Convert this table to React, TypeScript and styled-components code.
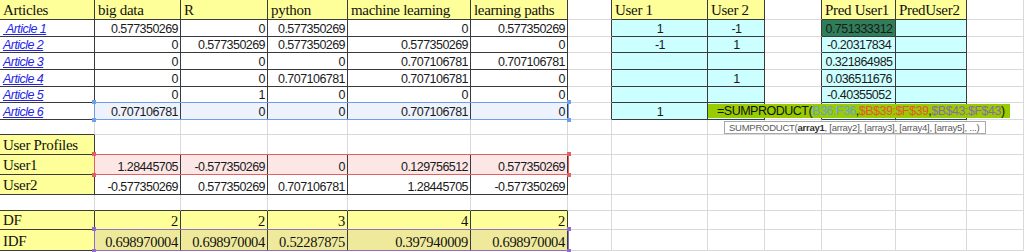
import React from "react";
import styled, { createGlobalStyle, css } from "styled-components";

const COLS = [95, 86, 87, 80, 123, 97, 44, 96, 57, 57, 74, 71, 57];
const ROWS = [20, 17, 16, 17, 17, 16, 17, 15, 20, 20, 20, 16, 19, 21];

const DARK = "#3a3a3a";
const GRID = "#d9d9d9";
const YELLOW = "#ffff99";
const CYAN = "#ccffff";
const PINK = "#fce6e6";
const ICE = "#edf2fc";
const SHADE = "#efe99c";
const DEEP = "#2f7d59";

type Font = "serif" | "sans" | "link" | "serifNum" | "none";
type Align = "left" | "right" | "center";

interface CellSpec {
  text?: string;
  font?: Font;
  align?: Align;
  fill?: string;
  r?: boolean;
  b?: boolean;
}

const Global = createGlobalStyle`
  html, body {
    margin: 0;
    padding: 0;
    width: 1024px;
    height: 252px;
    overflow: hidden;
    background: #ffffff;
  }
  #root { width: 1024px; height: 252px; }
`;

const fontCss: Record<Font, ReturnType<typeof css>> = {
  serif: css`
    font-family: "Liberation Serif", "Times New Roman", serif;
    font-size: 15px;
    letter-spacing: -0.3px;
    line-height: 17px;
    color: #111;
  `,
  serifNum: css`
    font-family: "Liberation Serif", "Times New Roman", serif;
    font-size: 14.5px;
    letter-spacing: -0.3px;
    line-height: 16px;
    color: #111;
  `,
  sans: css`
    font-family: "Liberation Sans", Arial, sans-serif;
    font-size: 12.5px;
    letter-spacing: -0.55px;
    line-height: 14px;
    color: #1a1a1a;
  `,
  link: css`
    font-family: "Liberation Sans", Arial, sans-serif;
    font-size: 12.5px;
    font-style: italic;
    letter-spacing: -0.55px;
    line-height: 14px;
    color: #2424e6;
    text-decoration: underline;
  `,
  none: css``,
};

const Sheet = styled.div`
  position: relative;
  display: grid;
  grid-template-columns: ${COLS.map((c) => `${c}px`).join(" ")};
  grid-template-rows: ${ROWS.map((r) => `${r}px`).join(" ")};
  width: 1024px;
  height: 252px;
  overflow: hidden;
`;

const Cell = styled.div<{
  $fill: string;
  $align: Align;
  $font: Font;
  $r: boolean;
  $b: boolean;
}>`
  box-sizing: border-box;
  min-width: 0;
  overflow: hidden;
  white-space: nowrap;
  display: flex;
  align-items: flex-end;
  justify-content: ${(p) =>
    p.$align === "left" ? "flex-start" : p.$align === "right" ? "flex-end" : "center"};
  padding: 0 2px 0 3px;
  background: ${(p) => p.$fill};
  border-right: 1px solid ${(p) => (p.$r ? DARK : GRID)};
  border-bottom: 1px solid ${(p) => (p.$b ? DARK : GRID)};
  ${(p) => fontCss[p.$font]}
`;

const Frame = styled.div<{ $x: number; $y: number; $w: number; $h: number; $c: string }>`
  position: absolute;
  left: ${(p) => p.$x}px;
  top: ${(p) => p.$y}px;
  width: ${(p) => p.$w}px;
  height: ${(p) => p.$h}px;
  box-sizing: border-box;
  border: 1px solid ${(p) => p.$c};
  pointer-events: none;
`;

const Handle = styled.span<{ $c: string; $v: "top" | "bottom"; $hz: "left" | "right" }>`
  position: absolute;
  width: 4px;
  height: 4px;
  background: ${(p) => p.$c};
  ${(p) => p.$v}: -3px;
  ${(p) => p.$hz}: -3px;
`;

const FormulaEditor = styled.div`
  position: absolute;
  left: 708px;
  top: 104px;
  width: 302px;
  height: 14px;
  box-sizing: border-box;
  padding-left: 9px;
  background: #99cc00;
  font-family: "Liberation Sans", Arial, sans-serif;
  font-size: 12.5px;
  letter-spacing: -0.5px;
  line-height: 14px;
  color: #111;
  white-space: nowrap;
`;

const Ref = styled.span<{ $c: string }>`
  color: ${(p) => p.$c};
`;

const Tip = styled.div`
  position: absolute;
  left: 724px;
  top: 121px;
  width: 262px;
  height: 13px;
  box-sizing: border-box;
  padding-left: 4px;
  background: #ffffff;
  border: 1px solid #a8a8a8;
  font-family: "Liberation Sans", Arial, sans-serif;
  font-size: 9.5px;
  letter-spacing: -0.25px;
  line-height: 11px;
  color: #5a5a5a;
  white-space: nowrap;
`;

const Strong = styled.b`
  color: #333;
  font-weight: bold;
`;

const head = (t: string): CellSpec => ({ text: t, font: "serif", fill: YELLOW, r: true, b: true });
const num = (t: string, fill = "#ffffff", align: Align = "right"): CellSpec => ({
  text: t,
  font: "sans",
  align,
  fill,
  r: true,
  b: true,
});
const sNum = (t: string, fill: string): CellSpec => ({ text: t, font: "serifNum", align: "right", fill, r: true, b: true });
const blank = (r = false, b = false): CellSpec => ({ r, b });

const articles: string[][] = [
  ["0.577350269", "0", "0.577350269", "0", "0.577350269"],
  ["0", "0.577350269", "0.577350269", "0.577350269", "0"],
  ["0", "0", "0", "0.707106781", "0.707106781"],
  ["0", "0", "0.707106781", "0.707106781", "0"],
  ["0", "1", "0", "0", "0"],
  ["0.707106781", "0", "0", "0.707106781", "0"],
];
const users: [string, string][] = [
  ["1", "-1"],
  ["-1", "1"],
  ["", ""],
  ["", "1"],
  ["", ""],
  ["1", ""],
];
const preds = ["0.751333312", "-0.20317834", "0.321864985", "0.036511676", "-0.40355052", ""];

const buildRows = (): CellSpec[][] => {
  const rows: CellSpec[][] = [];
  rows.push([
    head("Articles"),
    head("big data"),
    head("R"),
    head("python"),
    head("machine learning"),
    head("learning paths"),
    blank(true),
    head("User 1"),
    head("User 2"),
    blank(true),
    head("Pred User1"),
    head("PredUser2"),
    blank(),
  ]);
  articles.forEach((vals, i) => {
    const fill = i === 5 ? ICE : "#ffffff";
    rows.push([
      { text: (i === 0 ? "\u00a0" : "") + `Article ${i + 1}`, font: "link", r: true, b: true, fill: "#ffffff" },
      ...vals.map((v) => num(v, fill)),
      blank(true),
      num(users[i][0], CYAN, "center"),
      num(users[i][1], CYAN, "center"),
      blank(true),
      num(preds[i], i === 0 ? DEEP : CYAN, "center"),
      num("", CYAN),
      blank(),
    ]);
  });
  const emptyRow = (aBottom: boolean, restBottom: boolean): CellSpec[] => [
    blank(false, aBottom),
    ...Array.from({ length: 5 }, () => blank(false, restBottom)),
    ...Array.from({ length: 7 }, () => blank()),
  ];
  rows.push(emptyRow(true, false));
  rows.push([head("User Profiles"), ...Array.from({ length: 5 }, () => blank(false, true)), ...Array.from({ length: 7 }, () => blank())]);
  rows.push([
    head("User1"),
    ...["1.28445705", "-0.577350269", "0", "0.129756512", "0.577350269"].map((v) => num(v, PINK)),
    ...Array.from({ length: 7 }, () => blank()),
  ]);
  rows.push([
    head("User2"),
    ...["-0.577350269", "0.577350269", "0.707106781", "1.28445705", "-0.577350269"].map((v) => num(v)),
    ...Array.from({ length: 7 }, () => blank()),
  ]);
  rows.push(emptyRow(true, true));
  rows.push([head("DF"), ...["2", "2", "3", "4", "2"].map((v) => sNum(v, YELLOW)), ...Array.from({ length: 7 }, () => blank())]);
  rows.push([
    head("IDF"),
    ...["0.698970004", "0.698970004", "0.52287875", "0.397940009", "0.698970004"].map((v) => sNum(v, SHADE)),
    ...Array.from({ length: 7 }, () => blank()),
  ]);
  return rows;
};

const RangeFrame: React.FC<{ x: number; y: number; w: number; h: number; c: string }> = ({ x, y, w, h, c }) => (
  <Frame $x={x} $y={y} $w={w} $h={h} $c={c}>
    <Handle $c={c} $v="top" $hz="left" />
    <Handle $c={c} $v="top" $hz="right" />
    <Handle $c={c} $v="bottom" $hz="left" />
    <Handle $c={c} $v="bottom" $hz="right" />
  </Frame>
);

export default function App() {
  const rows = buildRows();
  return (
    <>
      <Global />
      <Sheet>
        {rows.flatMap((row, ri) =>
          row.map((c, ci) => (
            <Cell
              key={`${ri}-${ci}`}
              $fill={c.fill ?? "#ffffff"}
              $align={c.align ?? "left"}
              $font={c.font ?? "none"}
              $r={!!c.r}
              $b={!!c.b}
            >
              {c.text}
            </Cell>
          ))
        )}
        <RangeFrame x={94} y={102} w={475} h={18} c="#6f9fe8" />
        <RangeFrame x={94} y={154} w={475} h={21} c="#e26060" />
        <RangeFrame x={94} y={229} w={475} h={22} c="#8f6cd0" />
        <FormulaEditor>
          {"=SUMPRODUCT("}
          <Ref $c="#6a9fd6">B36:F36</Ref>
          {","}
          <Ref $c="#e4553c">$B$39:$F$39</Ref>
          {","}
          <Ref $c="#8a6aaa">$B$43:$F$43</Ref>
          {")"}
        </FormulaEditor>
        <Tip>
          SUMPRODUCT(<Strong>array1</Strong>, [array2], [array3], [array4], [array5], ...)
        </Tip>
      </Sheet>
    </>
  );
}
